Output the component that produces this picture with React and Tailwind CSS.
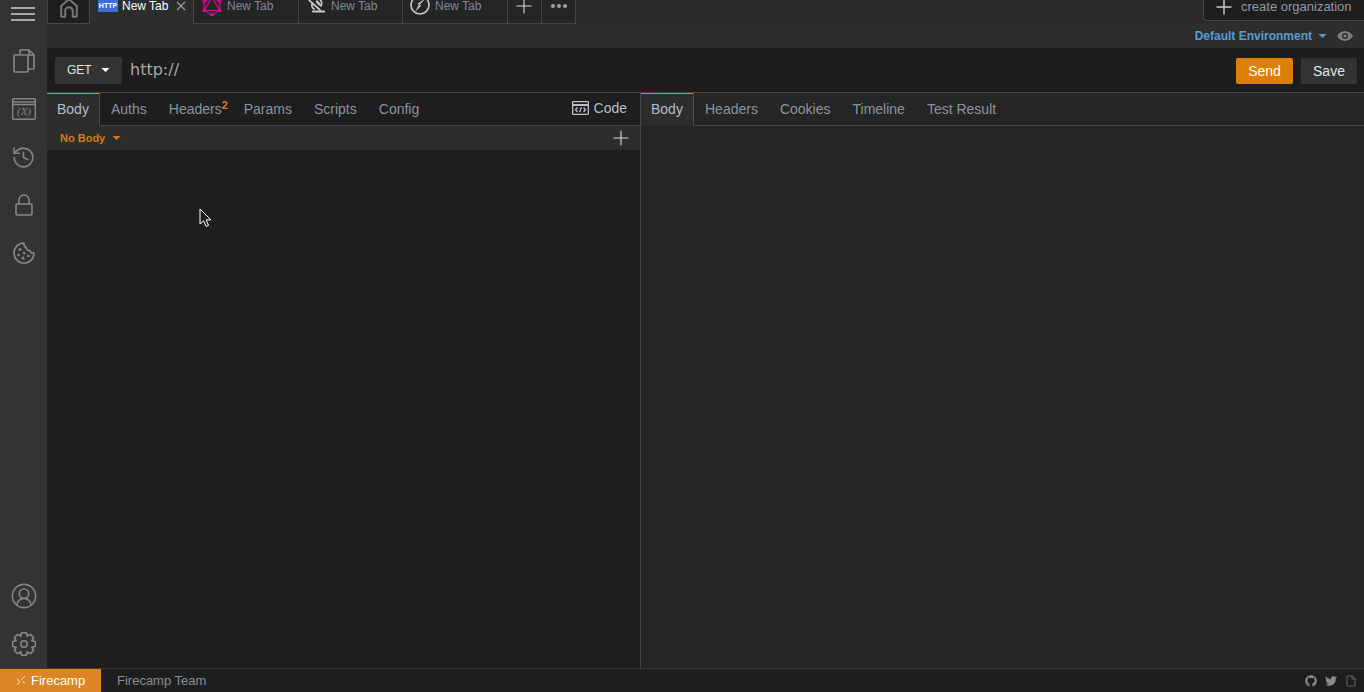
import React from 'react';
import { History, CircleUserRound, Plus, File } from 'lucide-react';
import { FaGithub, FaTwitter } from 'react-icons/fa';

const Caret = ({ className }) => (
  <svg viewBox="0 0 10 5" className={className} fill="currentColor">
    <path d="M0 0h10L5 5z" />
  </svg>
);

const SideIcon = ({ children }) => (
  <div className="h-12 flex items-center justify-center text-[#858585]">{children}</div>
);

const PagesIcon = () => (
  <svg width="24" height="26" viewBox="0 0 24 26" fill="none" stroke="currentColor" strokeWidth="1.7" strokeLinejoin="round">
    <path d="M8 6V2h9l5 5v13a1 1 0 0 1-1 1h-5" />
    <path d="M17 2v5h5" />
    <path d="M3 7h12a1 1 0 0 1 1 1v15a1 1 0 0 1-1 1H3a1 1 0 0 1-1-1V8a1 1 0 0 1 1-1z" />
  </svg>
);

const EnvIcon = () => (
  <svg width="24" height="22" viewBox="0 0 24 22" fill="none" stroke="currentColor" strokeWidth="1.4">
    <rect x="0.7" y="0.7" width="22.6" height="20.6" rx="1" />
    <path d="M1 4h22M1 6.5h22" />
    <text x="12" y="17" textAnchor="middle" fontSize="11" fontStyle="italic" fill="currentColor" stroke="none" fontFamily="Liberation Serif, serif">(X)</text>
  </svg>
);

const LockIcon = () => (
  <svg width="18" height="22" viewBox="0 0 18 22" fill="none" stroke="currentColor" strokeWidth="1.6">
    <rect x="1" y="10" width="16" height="11" rx="1.5" />
    <path d="M4 10V6a5 5 0 0 1 10 0v4" />
  </svg>
);

const CookieIcon = () => (
  <svg width="22" height="22" viewBox="0 0 22 22" fill="none" stroke="currentColor" strokeWidth="1.7">
    <path d="M11 1a10 10 0 1 0 10 10c-2 .6-3.6-.4-4-2.400-2 .2-3.800-1-3.800-3.200C11.600 5 10.800 3 11 1z" strokeLinejoin="round" />
    <g fill="currentColor" stroke="none">
      <circle cx="7" cy="7.500" r="1.500" />
      <circle cx="11" cy="11" r="1.300" />
      <circle cx="5.500" cy="13" r="1.300" />
      <circle cx="10" cy="16" r="1.500" />
      <circle cx="15.500" cy="14" r="1.300" />
    </g>
  </svg>
);

// gear outline with 8 teeth
const gearPath = () => {
  const pts = [];
  for (let i = 0; i < 8; i++) {
    const a = (i * Math.PI) / 4;
    [[-0.42, 8.6], [-0.2, 11.6], [0.2, 11.6], [0.42, 8.6]].forEach(([da, r]) => {
      pts.push(`${(12 + r * Math.sin(a + da)).toFixed(2)} ${(12 - r * Math.cos(a + da)).toFixed(2)}`);
    });
  }
  return `M${pts.join('L')}Z`;
};

const GearIcon = () => (
  <svg width="24" height="24" viewBox="0 0 24 24" fill="none" stroke="currentColor" strokeWidth="1.6" strokeLinejoin="round">
    <path d={gearPath()} />
    <circle cx="12" cy="12" r="3.200" />
  </svg>
);

const HomeIcon = () => (
  <svg width="18" height="20" viewBox="0 0 18 20" fill="none" stroke="#767676" strokeWidth="2" strokeLinejoin="round">
    <path d="M1.200 8L9 1.200 16.800 8v10a.8.8 0 0 1-.8.8h-3.200V13a3.800 3.800 0 0 0-7.600 0v5.800H2a.8.8 0 0 1-.8-.8z" />
  </svg>
);

const GraphqlIcon = () => (
  <svg width="20" height="20" viewBox="0 0 20 20" fill="none" stroke="#e10098" strokeWidth="1.2" className="shrink-0">
    <path d="M10 1l7.800 4.500v9L10 19l-7.800-4.500v-9z" />
    <path d="M10 1l7.800 13.500H2.200z" />
    <g fill="#e10098" stroke="none">
      <circle cx="10" cy="1" r="1.800" />
      <circle cx="17.800" cy="5.500" r="1.800" />
      <circle cx="17.800" cy="14.500" r="1.800" />
      <circle cx="10" cy="19" r="1.800" />
      <circle cx="2.200" cy="14.500" r="1.800" />
      <circle cx="2.200" cy="5.500" r="1.800" />
    </g>
  </svg>
);

const SocketIcon = () => (
  <svg width="17" height="17" viewBox="0 0 17 17" fill="none" stroke="#c8c8c8" strokeWidth="1.700" strokeLinecap="round" className="shrink-0 -mt-[1px]">
    <path d="M1 3l11 10" />
    <path d="M6 2c2-1.500 5-1 6.500 1s1.500 4 .5 6" />
    <path d="M4 7c-.5 2 .5 4 2 5" />
    <path d="M9 4.500l2.500 3" strokeWidth="2.400" />
    <path d="M5 14.500h11" strokeWidth="2.200" />
  </svg>
);

const IoIcon = () => (
  <svg width="20" height="20" viewBox="0 0 20 20" fill="none" stroke="#c4c4c4" strokeWidth="1.600" className="shrink-0 -mt-[2px]">
    <circle cx="10" cy="10" r="9" />
    <path d="M14 4.500L8.500 10.200h3L6 15.500l2.800-6.200h-2z" fill="#d0d0d0" stroke="none" />
    <path d="M14 4.500L9.500 9.500M10.500 10.500L6 15.500" strokeWidth="1" stroke="#d0d0d0" />
  </svg>
);

const CodeIcon = () => (
  <svg width="17" height="14" viewBox="0 0 17 14" fill="none" stroke="#b8c0c8" strokeWidth="1.300">
    <rect x="0.600" y="0.600" width="15.800" height="12.800" rx="0.800" />
    <path d="M1 4h15" strokeWidth="2" />
    <path d="M5.500 6.500L3.500 8.800l2 2.200M11.500 6.500l2 2.300-2 2.200M9.300 6.300l-1.600 5" />
  </svg>
);

const Tab = ({ icon, label, className }) => (
  <div className={`h-[24px] shrink-0 flex border-r border-b border-[#454545] bg-[#252525] ${className}`}>
    <div className="h-[12px] flex items-center">
      <div className="w-[20px] flex justify-center shrink-0">{icon}</div>
      <span className="ml-[5px] text-[12px] leading-[12px] text-[#7f8a94]">{label}</span>
    </div>
  </div>
);

const leftTabs = ['Auths', 'Headers', 'Params', 'Scripts', 'Config'];
const rightTabs = ['Headers', 'Cookies', 'Timeline', 'Test Result'];

const ActiveTab = () => (
  <div className="h-[33px] w-[53px] pl-[10px] pb-[2px] flex items-center border-t border-r border-t-[#d9820f] border-r-[#4a4a4a] bg-[#2d2d2d] text-[14px] text-[#b4bec8]">
    Body
  </div>
);

export default function App() {
  return (
    <div className="h-screen flex flex-col overflow-hidden bg-[#1e1e1e] font-['Liberation_Sans',Arial,sans-serif]">
      <div className="flex-1 flex min-h-0">
        <aside className="w-[47px] shrink-0 bg-[#333333] flex flex-col justify-between">
          <div>
            <div className="h-[37px] pt-[7px] pr-[1px] flex flex-col items-center gap-[4px]">
              <div className="w-[24px] h-[2px] bg-[#a8a8a8]" />
              <div className="w-[24px] h-[2px] bg-[#a8a8a8]" />
              <div className="w-[24px] h-[2px] bg-[#a8a8a8]" />
            </div>
            <SideIcon><PagesIcon /></SideIcon>
            <SideIcon><EnvIcon /></SideIcon>
            <SideIcon><History size={25} strokeWidth={1.500} /></SideIcon>
            <SideIcon><LockIcon /></SideIcon>
            <SideIcon><CookieIcon /></SideIcon>
          </div>
          <div>
            <SideIcon><CircleUserRound size={28} strokeWidth={1.400} /></SideIcon>
            <SideIcon><GearIcon /></SideIcon>
          </div>
        </aside>

        <main className="flex-1 min-w-0 flex flex-col">
          {/* tab strip, its top is cut by the window */}
          <div className="h-[24px] shrink-0 flex bg-[#2b2b2b]">
            <div className="w-[43px] h-[24px] flex justify-center border-l border-r border-b border-[#454545] bg-[#1f1f1f]">
              <div className="h-[15px] flex items-center"><HomeIcon /></div>
            </div>
            <div className="w-[103px] h-[24px] flex pl-[8px] bg-[#2d2d2d]">
              <div className="h-[12px] flex items-center">
                <div className="w-[20px] h-[12px] bg-[#3b6fe0] text-white text-[7px] font-bold leading-[12px] text-center shrink-0">HTTP</div>
                <span className="ml-[4px] text-[12px] leading-[12px] text-white">New Tab</span>
                <span className="ml-[8px] text-[#a0a0a0]">
                  <svg width="10" height="10" viewBox="0 0 10 10" stroke="currentColor" strokeWidth="1.100"><path d="M1 1l8 8M9 1l-8 8" /></svg>
                </span>
              </div>
            </div>
            <div className="w-[1px] h-[24px] bg-[#454545]" />
            <Tab icon={<GraphqlIcon />} label="New Tab" className="w-[105px] pl-[8px]" />
            <Tab icon={<SocketIcon />} label="New Tab" className="w-[104px] pl-[7px]" />
            <Tab icon={<IoIcon />} label="New Tab" className="w-[105px] pl-[7px]" />
            <div className="w-[34px] h-[24px] pr-[2px] flex justify-center border-r border-b border-[#454545] bg-[#252525] text-[#d8d8d8]">
              <div className="h-[12px] flex items-center"><Plus size={24} strokeWidth={1.100} className="shrink-0" /></div>
            </div>
            <div className="w-[34px] h-[24px] flex justify-center border-r border-b border-[#454545] bg-[#252525]">
              <div className="h-[12px] flex items-center gap-[2px]">
                <i className="w-[4px] h-[4px] rounded-full bg-[#9aa4ae]" />
                <i className="w-[4px] h-[4px] rounded-full bg-[#9aa4ae]" />
                <i className="w-[4px] h-[4px] rounded-full bg-[#9aa4ae]" />
              </div>
            </div>
            <div className="ml-auto w-[161px] h-[21px] flex items-center pl-[8px] gap-[5px] pb-[6px] border-l border-b border-[#454545] rounded-bl-[4px] bg-[#1e1e1e] text-[13px] text-[#8f99a3]">
              <Plus size={24} strokeWidth={1.500} className="text-[#c8c8c8] shrink-0" />
              create organization
            </div>
          </div>

          <div className="h-[24px] shrink-0 flex items-center justify-end pr-[11px] bg-[#2d2d2d] text-[#5a9bd5]">
            <span className="text-[12px] font-bold">Default Environment</span>
            <Caret className="w-[9px] h-[4px] ml-[6px]" />
            <svg width="16" height="12" viewBox="0 0 16 12" className="ml-[10px]" fill="#7d7d7d">
              <path fillRule="evenodd" d="M8 1c3.500 0 6.300 2.200 8 5-1.700 2.800-4.500 5-8 5s-6.300-2.200-8-5c1.700-2.800 4.500-5 8-5zm0 2a3 3 0 1 0 0 6 3 3 0 0 0 0-6z" />
              <circle cx="8" cy="6" r="1.600" />
            </svg>
          </div>

          <div className="h-[44px] shrink-0 flex items-center pl-[8px] pr-[7px] bg-[#1d1d1d]">
            <div className="w-[67px] h-[27px] flex items-center pl-[12px] rounded-[2px] bg-[#333333] text-[12px] text-[#dfe5ea]">
              GET
              <Caret className="w-[9px] h-[4px] ml-[9px] text-white" />
            </div>
            <span className="ml-[8px] text-[16px] text-[#a8a8a8] font-['DejaVu_Sans',sans-serif]">http://</span>
            <button className="ml-auto w-[57px] h-[26px] mt-[2px] rounded-[2px] bg-[#db7f00] text-[14px] text-white">Send</button>
            <button className="ml-[8px] w-[56px] h-[26px] mt-[2px] rounded-[2px] bg-[#333333] text-[14px] text-[#dfe5ea]">Save</button>
          </div>

          <div className="flex-1 min-h-0 flex border-t border-[#454545]">
            <section className="w-[594px] shrink-0 flex flex-col border-r border-[#454545] bg-[#1e1e1e]">
              <div className="h-[33px] shrink-0 flex border-b border-[#454545]">
                <ActiveTab />
                {leftTabs.map((t) => (
                  <div key={t} className="px-[11px] flex items-center text-[14px] text-[#8a949e]">
                    {t}
                    {t === 'Headers' && (
                      <span className="w-0 text-[11px] leading-[11px] font-bold text-[#d9820f] -mt-[7px]">2</span>
                    )}
                  </div>
                ))}
                <div className="ml-auto pr-[13px] pb-[2px] flex items-center gap-[5px] text-[14px] text-[#b4bec8]">
                  <CodeIcon />
                  Code
                </div>
              </div>
              <div className="h-[24px] shrink-0 flex items-center pl-[13px] pr-[7px] bg-[#2d2d2d] text-[#d27c0e]">
                <span className="text-[11px] font-bold">No Body</span>
                <Caret className="w-[9px] h-[4px] ml-[7px] -mt-[1px]" />
                <Plus size={24} strokeWidth={1.100} className="ml-auto text-[#d8d8d8] shrink-0" />
              </div>
              <div className="flex-1 relative">
                <svg width="14" height="20" viewBox="0 0 14 20" className="absolute left-[152px] top-[58px]" fill="#1e1e1e" stroke="#ffffff" strokeWidth="1">
                  <path d="M1 1v15l3.600-3.200 2.500 5.600 2.500-1.100-2.500-5.400H12z" />
                </svg>
              </div>
            </section>
            <section className="flex-1 min-w-0 bg-[#252525]">
              <div className="h-[33px] flex border-b border-[#454545]">
                <ActiveTab />
                {rightTabs.map((t) => (
                  <div key={t} className="px-[11px] flex items-center text-[14px] text-[#8a949e]">{t}</div>
                ))}
              </div>
            </section>
          </div>
        </main>
      </div>

      <footer className="h-[24px] shrink-0 flex items-center border-t border-[#3a3a3a] bg-[#1e1e1e]">
        <div className="w-[101px] h-full flex items-center pl-[15px] gap-[5px] bg-[#db8524] text-[13px] text-white">
          <svg width="11" height="11" viewBox="0 0 11 11" fill="none" stroke="#f8e3c8" strokeWidth="1">
            <path d="M2 4l3 2.500L2 10M10 1L6 5M7.500 7l2.500 1" />
          </svg>
          Firecamp
        </div>
        <span className="ml-[16px] text-[13px] text-[#848e98]">Firecamp Team</span>
        <div className="ml-auto pr-[7px] flex items-center gap-[8px] text-[#8a8a8a]">
          <FaGithub size={12} />
          <FaTwitter size={12} />
          <File size={12} strokeWidth={1.300} />
        </div>
      </footer>
    </div>
  );
}
